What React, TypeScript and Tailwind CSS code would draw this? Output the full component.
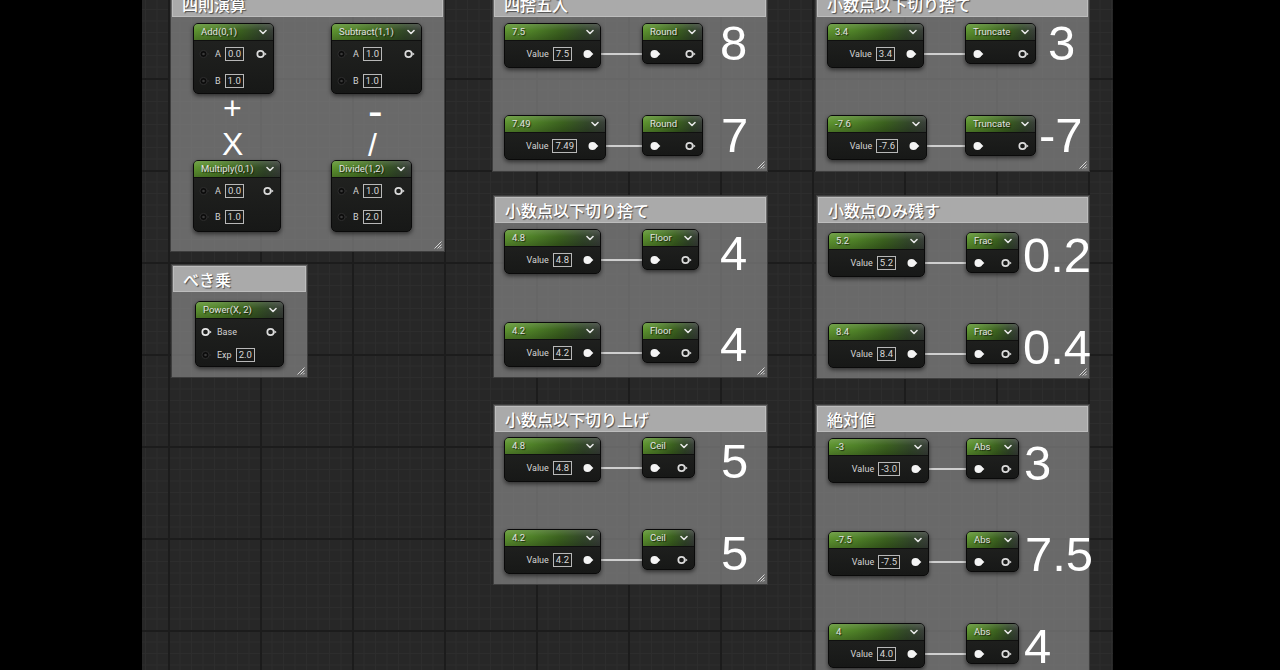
import React from "react";

const OX = 142;

type Box = { x: number; y: number; w: number; h: number; title: string };
type CNode = { x: number; y: number; w: number; title: string; value: string };
type FNode = { x: number; y: number; w: number; title: string };
type Pair = { c: CNode; f: FNode; r: { text: string; x: number; cy: number } };

const comments: Box[] = [
  { x: 170, y: -11, w: 275, h: 263, title: "四則演算" },
  { x: 171, y: 264, w: 137, h: 114, title: "べき乗" },
  { x: 492, y: -11, w: 276, h: 183, title: "四捨五入" },
  { x: 815, y: -11, w: 275, h: 183, title: "小数点以下切り捨て" },
  { x: 493, y: 195, w: 275, h: 183, title: "小数点以下切り捨て" },
  { x: 816, y: 195, w: 274, h: 184, title: "小数点のみ残す" },
  { x: 493, y: 404, w: 275, h: 181, title: "小数点以下切り上げ" },
  { x: 815, y: 404, w: 275, h: 290, title: "絶対値" },
];

const pairs: Pair[] = [
  { c: { x: 504, y: 23, w: 97, title: "7.5", value: "7.5" }, f: { x: 642, y: 23, w: 61, title: "Round" }, r: { text: "8", x: 723, cy: 43 } },
  { c: { x: 504, y: 115, w: 102, title: "7.49", value: "7.49" }, f: { x: 642, y: 115, w: 61, title: "Round" }, r: { text: "7", x: 724, cy: 135 } },
  { c: { x: 827, y: 23, w: 97, title: "3.4", value: "3.4" }, f: { x: 965, y: 23, w: 71, title: "Truncate" }, r: { text: "3", x: 1051, cy: 43 } },
  { c: { x: 827, y: 115, w: 100, title: "-7.6", value: "-7.6" }, f: { x: 965, y: 115, w: 71, title: "Truncate" }, r: { text: "-7", x: 1042, cy: 135 } },
  { c: { x: 504, y: 229, w: 97, title: "4.8", value: "4.8" }, f: { x: 642, y: 229, w: 57, title: "Floor" }, r: { text: "4", x: 723, cy: 253 } },
  { c: { x: 504, y: 322, w: 97, title: "4.2", value: "4.2" }, f: { x: 642, y: 322, w: 57, title: "Floor" }, r: { text: "4", x: 723, cy: 344 } },
  { c: { x: 828, y: 232, w: 97, title: "5.2", value: "5.2" }, f: { x: 966, y: 232, w: 53, title: "Frac" }, r: { text: "0.2", x: 1026, cy: 255 } },
  { c: { x: 828, y: 323, w: 97, title: "8.4", value: "8.4" }, f: { x: 966, y: 323, w: 53, title: "Frac" }, r: { text: "0.4", x: 1026, cy: 347 } },
  { c: { x: 504, y: 437, w: 97, title: "4.8", value: "4.8" }, f: { x: 642, y: 437, w: 53, title: "Ceil" }, r: { text: "5", x: 724, cy: 461 } },
  { c: { x: 504, y: 529, w: 97, title: "4.2", value: "4.2" }, f: { x: 642, y: 529, w: 53, title: "Ceil" }, r: { text: "5", x: 724, cy: 553 } },
  { c: { x: 828, y: 438, w: 101, title: "-3", value: "-3.0" }, f: { x: 966, y: 438, w: 53, title: "Abs" }, r: { text: "3", x: 1027, cy: 463 } },
  { c: { x: 828, y: 531, w: 101, title: "-7.5", value: "-7.5" }, f: { x: 966, y: 531, w: 53, title: "Abs" }, r: { text: "7.5", x: 1028, cy: 554 } },
  { c: { x: 828, y: 623, w: 97, title: "4", value: "4.0" }, f: { x: 966, y: 623, w: 53, title: "Abs" }, r: { text: "4", x: 1027, cy: 646 } },
];

function Chevron() {
  return (
    <svg width="8" height="6" viewBox="0 0 8 6" className="shrink-0">
      <path d="M1 1.5 L4 4.5 L7 1.5" stroke="#e6e6e6" strokeWidth="1.6" fill="none" strokeLinecap="round" strokeLinejoin="round" />
    </svg>
  );
}

function PinFilled() {
  return (
    <svg width="11" height="10" viewBox="0 0 11 10" className="shrink-0">
      <circle cx="4.5" cy="5" r="4" fill="#f4f4f4" />
      <path d="M7.6 2.6 L10.4 5 L7.6 7.4 Z" fill="#f4f4f4" />
    </svg>
  );
}

function PinRing({ color = "#dcdcdc" }: { color?: string }) {
  return (
    <svg width="11" height="10" viewBox="0 0 11 10" className="shrink-0">
      <circle cx="4.5" cy="5" r="3.2" fill="none" stroke={color} strokeWidth="1.7" />
      <path d="M8.4 3.2 L10.6 5 L8.4 6.8 Z" fill={color} />
    </svg>
  );
}

function PinDark() {
  return (
    <svg width="11" height="10" viewBox="0 0 11 10" className="shrink-0">
      <circle cx="4.5" cy="5" r="3.6" fill="#0c0c0c" stroke="#2e2e2e" strokeWidth="1" />
      <circle cx="4.5" cy="5" r="1.3" fill="#3a3a3a" />
      <path d="M8.5 3.4 L10.4 5 L8.5 6.6 Z" fill="#2a2a2a" />
    </svg>
  );
}

function Header({ title }: { title: string }) {
  return (
    <div className="h-[17px] rounded-t-[4px] flex items-center justify-between pl-[7px] pr-[6px] bg-[image:linear-gradient(180deg,rgba(255,255,255,0.14)_0%,rgba(0,0,0,0)_40%,rgba(0,0,0,0.22)_100%),linear-gradient(90deg,#5e9430_0%,#4f8128_28%,#3b611f_58%,#33482a_82%,#3a403a_100%)] border-b border-[#101010]">
      <span className="text-[9.5px] leading-none text-[#e2e2e2] whitespace-nowrap [text-shadow:1px_1px_1px_rgba(0,0,0,0.7)]">{title}</span>
      <Chevron />
    </div>
  );
}

function ValueBox({ v }: { v: string }) {
  return (
    <div className="h-[14px] border border-[#b8b8b8] px-[2px] flex items-center text-[9.5px] leading-none text-[#d8d8d8]">{v}</div>
  );
}

const nodeShell =
  "absolute rounded-[5px] bg-[linear-gradient(180deg,#232422,#171817)] border border-[#0a0a0a] shadow-[0_2px_4px_rgba(0,0,0,0.55)] font-['Roboto',sans-serif] flex flex-col";

function ConstNode({ n }: { n: CNode }) {
  return (
    <div className={nodeShell} style={{ left: n.x - OX, top: n.y, width: n.w, height: 45 }}>
      <Header title={n.title} />
      <div className="mt-[6px] h-[14px] flex items-center justify-end pr-[6px]">
        <span className="text-[9px] leading-none text-[#d4d4d4] mr-[4px]">Value</span>
        <ValueBox v={n.value} />
        <div className="ml-[11px]">
          <PinFilled />
        </div>
      </div>
    </div>
  );
}

function FuncNode({ n }: { n: FNode }) {
  return (
    <div className={nodeShell} style={{ left: n.x - OX, top: n.y, width: n.w, height: 41 }}>
      <Header title={n.title} />
      <div className="mt-[6px] h-[14px] flex items-center justify-between pl-[7px] pr-[6px]">
        <PinFilled />
        <PinRing />
      </div>
    </div>
  );
}

type MRow = { label: string; value?: string; pin: "dark" | "ring"; out?: boolean };

function MathNode({ x, y, w, h, title, rows, gap }: { x: number; y: number; w: number; h: number; title: string; rows: MRow[]; gap: number }) {
  return (
    <div className={nodeShell} style={{ left: x - OX, top: y, width: w, height: h }}>
      <Header title={title} />
      <div className="flex flex-col mt-[6px] pl-[5px] pr-[6px]" style={{ rowGap: gap }}>
        {rows.map((r, i) => (
          <div key={i} className="h-[14px] flex items-center">
            {r.pin === "dark" ? <PinDark /> : <PinRing color="#e6e6e6" />}
            <span className="ml-[5px] text-[9px] leading-none text-[#d4d4d4]">{r.label}</span>
            {r.value && (
              <div className="ml-[4px]">
                <ValueBox v={r.value} />
              </div>
            )}
            <div className="flex-1" />
            {r.out && <PinRing />}
          </div>
        ))}
      </div>
    </div>
  );
}

function Comment({ b }: { b: Box }) {
  return (
    <div
      className="absolute border border-[#3e3e3e] bg-[rgba(134,134,134,0.7)] flex flex-col"
      style={{ left: b.x - OX, top: b.y, width: b.w, height: b.h }}
    >
      <div className="mx-[1px] mt-[1px] h-[26px] bg-[#aaaaaa] border border-[#bdbdbd] flex items-center pl-[9px]">
        <span className="text-[16px] leading-none font-medium text-white font-['Noto_Sans_CJK_JP',sans-serif] [text-shadow:1px_1px_1px_rgba(0,0,0,0.55)] whitespace-nowrap">
          {b.title}
        </span>
      </div>
      <div className="flex-1" />
      <div className="flex justify-end pr-[2px] pb-[2px]">
        <svg width="9" height="9" viewBox="0 0 9 9">
          <path d="M8.5 1.5 L1.5 8.5 M8.5 4.5 L4.5 8.5 M8.5 7 L7 8.5" stroke="#d6d6d6" strokeWidth="1" />
        </svg>
      </div>
    </div>
  );
}

function BigText({ text, x, cy }: { text: string; x: number; cy: number }) {
  return (
    <div
      className="absolute text-[49px] leading-none text-white font-['Liberation_Sans',Arial,sans-serif] whitespace-nowrap"
      style={{ left: x - OX - 3, top: cy - 24 }}
    >
      {text}
    </div>
  );
}

const opCls = "absolute leading-none text-white font-['Liberation_Sans',Arial,sans-serif]";

export default function App() {
  return (
    <div className="w-[1280px] h-[670px] bg-black flex overflow-hidden">
      <div className="w-[142px] shrink-0 bg-black" />
      <div className="relative w-[971px] h-[670px] shrink-0 overflow-hidden bg-[#272727] [background-image:linear-gradient(90deg,#1c1c1c_2px,transparent_2px),linear-gradient(180deg,#1c1c1c_2px,transparent_2px),linear-gradient(90deg,#2d2d2d_1px,transparent_1px),linear-gradient(180deg,#2d2d2d_1px,transparent_1px)] [background-size:92px_92px,92px_92px,11.5px_11.5px,11.5px_11.5px] [background-position:26px_78px,26px_78px,26px_78px,26px_78px]">
        {comments.map((b, i) => (
          <Comment key={i} b={b} />
        ))}

        {pairs.map((p, i) => {
          const x1 = p.c.x + p.c.w - 10;
          const x2 = p.f.x + 13;
          return (
            <div
              key={"w" + i}
              className="absolute h-[1.5px] bg-[#cfcfcf]"
              style={{ left: x1 - OX, top: p.c.y + 30, width: x2 - x1 }}
            />
          );
        })}

        {pairs.map((p, i) => (
          <React.Fragment key={"p" + i}>
            <ConstNode n={p.c} />
            <FuncNode n={p.f} />
            <BigText text={p.r.text} x={p.r.x} cy={p.r.cy} />
          </React.Fragment>
        ))}

        <MathNode x={193} y={23} w={81} h={71} title="Add(0,1)" gap={13}
          rows={[{ label: "A", value: "0.0", pin: "dark", out: true }, { label: "B", value: "1.0", pin: "dark" }]} />
        <MathNode x={331} y={23} w={91} h={71} title="Subtract(1,1)" gap={13}
          rows={[{ label: "A", value: "1.0", pin: "dark", out: true }, { label: "B", value: "1.0", pin: "dark" }]} />
        <MathNode x={193} y={160} w={88} h={72} title="Multiply(0,1)" gap={12}
          rows={[{ label: "A", value: "0.0", pin: "dark", out: true }, { label: "B", value: "1.0", pin: "dark" }]} />
        <MathNode x={331} y={160} w={81} h={72} title="Divide(1,2)" gap={12}
          rows={[{ label: "A", value: "1.0", pin: "dark", out: true }, { label: "B", value: "2.0", pin: "dark" }]} />
        <MathNode x={195} y={301} w={89} h={66} title="Power(X, 2)" gap={9}
          rows={[{ label: "Base", pin: "ring", out: true }, { label: "Exp", value: "2.0", pin: "dark" }]} />

        <div className={opCls + " text-[32px]"} style={{ left: 223 - OX, top: 92 }}>+</div>
        <div className={opCls + " text-[32px]"} style={{ left: 222 - OX, top: 128 }}>X</div>
        <div className={opCls + " text-[44px] h-[24px] leading-[24px]"} style={{ left: 368 - OX, top: 89 }}>-</div>
        <div className={opCls + " text-[32px]"} style={{ left: 368 - OX, top: 129 }}>/</div>
      </div>
      <div className="flex-1 bg-black" />
    </div>
  );
}
